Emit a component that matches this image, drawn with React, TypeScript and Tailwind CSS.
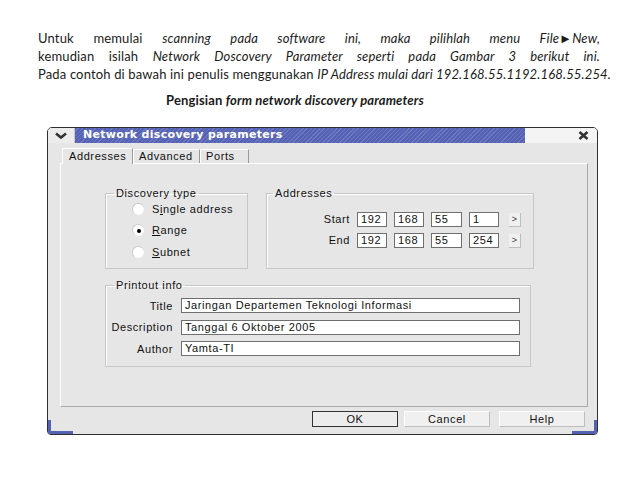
import React from 'react'

const dlgFont = { fontFamily: '"Liberation Sans", Arial, sans-serif' }

const Radio = ({ checked, children }: { checked?: boolean; children: React.ReactNode }) => (
  <div className="flex items-center h-[21.5px]">
    <span className="w-[12px] h-[12px] rounded-full bg-white border-l border-t border-[#c9c9c9] flex items-center justify-center ml-[26px] mr-[8px]">
      {checked && <span className="w-[4px] h-[4px] rounded-full bg-black" />}
    </span>
    <span>{children}</span>
  </div>
)

const Box = ({ v, w = 'w-[30px]' }: { v: string; w?: string }) => (
  <div className={`${w} h-[15px] bg-white border border-[#6f6f6f] pl-[3px] leading-[13px]`}>{v}</div>
)

const Arrow = () => (
  <div className="w-[12px] h-[14px] bg-[#f0f0f0] border-r border-b border-[#bdbdbd] text-[9px] leading-[13px] text-center text-[#333] tracking-normal">&gt;</div>
)

const Field = ({ label, value }: { label: string; value: string }) => (
  <div className="flex items-center h-[21.5px]">
    <span className="w-[75px] text-right pr-[8px]">{label}</span>
    <div className="flex-1 h-[15px] bg-white border border-[#6f6f6f] pl-[3px] leading-[13px]">{value}</div>
  </div>
)

const Btn = ({ label, def }: { label: string; def?: boolean }) => (
  <div
    className={`w-[86px] h-[16px] text-center leading-[14px] ${
      def
        ? 'border border-[#333] bg-[#ececec]'
        : 'bg-[#f0f0f0] border-t border-l border-white border-r border-b border-r-[#bdbdbd] border-b-[#bdbdbd]'
    }`}
  >
    {label}
  </div>
)

export default function App() {
  return (
    <div className="w-[638px] h-[478px] bg-white overflow-hidden text-[#1b1b1b]">
      <div className="pt-[29px] px-[38px] text-[13px] tracking-[0.15px] leading-[18px]" style={{ fontFamily: 'Lato, "Open Sans", sans-serif' }}>
        <p className="text-justify [text-align-last:justify]">
          Untuk memulai <i>scanning pada software ini, maka pilihlah menu File►New,</i>
        </p>
        <p className="text-justify [text-align-last:justify]">
          kemudian isilah <i>Network Doscovery Parameter seperti pada Gambar 3 berikut ini.</i>
        </p>
        <p className="whitespace-nowrap">
          Pada contoh di bawah ini penulis menggunakan <i>IP Address mulai dari 192.168.55.1192.168.55.254.</i>
        </p>
      </div>
      <p className="mt-[8px] pl-[166px] text-[13px] tracking-[0.15px] leading-[18px] font-bold" style={{ fontFamily: 'Lato, "Open Sans", sans-serif' }}>
        Pengisian <i>form network discovery parameters</i>
      </p>

      {/* dialog window */}
      <div
        className="relative mt-[18px] ml-[47px] w-[551px] h-[308px] border border-[#2f2f2f] rounded-t-[5px] rounded-b-[4px] bg-[#e6e6e6] flex flex-col text-[11px] tracking-[0.6px] text-[#111] overflow-hidden"
        style={dlgFont}
      >
        <div className="h-[15px] flex shrink-0">
          <div className="w-[27px] bg-[#ececec] flex items-center justify-center border-r border-[#c8c8c8]">
            <svg width="14" height="8" viewBox="0 0 14 8">
              <polyline points="2,1.5 7,5.5 12,1.5" fill="none" stroke="#333" strokeWidth="2.6" />
            </svg>
          </div>
          <div className="flex-1 flex items-center pl-[8px] bg-[repeating-linear-gradient(135deg,#5562b3_0px,#5562b3_2px,#6d78c2_2px,#6d78c2_3px)]">
            <span className="text-white font-bold text-[11px] tracking-[0.3px]" style={{ fontFamily: '"DejaVu Sans", Verdana, sans-serif' }}>
              Network discovery parameters
            </span>
          </div>
          <div className="w-[72px] bg-[#f4f4f4] flex items-center justify-end pr-[8px]">
            <svg width="11" height="9" viewBox="0 0 11 9">
              <path d="M1.5 1 L9.5 8 M9.5 1 L1.5 8" stroke="#333" strokeWidth="2.6" />
            </svg>
          </div>
        </div>

        <div className="flex-1 flex flex-col pl-[12px] pr-[9px] pt-[4px]">
          <div className="flex items-end h-[16px]">
            <div className="ml-[2px] w-[71px] h-[16px] bg-[#e6e6e6] border-t border-l border-white border-r border-r-[#9a9a9a] pl-[6px] leading-[15px] relative z-10 -mb-px pb-px">
              Addresses
            </div>
            <div className="w-[67px] h-[14px] border-t border-l border-white border-r border-r-[#9a9a9a] pl-[5px] leading-[13px]">Advanced</div>
            <div className="w-[49px] h-[14px] border-t border-l border-white border-r border-r-[#9a9a9a] pl-[5px] leading-[13px]">Ports</div>
          </div>

          <div className="h-[244px] border-t border-l border-white border-r border-b border-r-[#a9a9a9] border-b-[#a9a9a9] pl-[44px] pt-[23px]">
            <div className="flex gap-[18px]">
              <fieldset className="w-[143px] h-[82px] border border-[#c6c6c6] shadow-[inset_1px_1px_0_#fff]">
                <legend className="ml-[8px] px-[2px] leading-[13px]">Discovery type</legend>
                <div className="-mt-[2px]">
                  <Radio>
                    S<span className="underline">i</span>ngle address
                  </Radio>
                  <Radio checked>
                    <span className="underline">R</span>ange
                  </Radio>
                  <Radio>
                    <span className="underline">S</span>ubnet
                  </Radio>
                </div>
              </fieldset>
              <fieldset className="w-[268px] h-[82px] border border-[#c6c6c6] shadow-[inset_1px_1px_0_#fff]">
                <legend className="ml-[6px] px-[2px] leading-[13px]">Addresses</legend>
                <div className="pt-[12px] pr-[12px] flex flex-col items-end gap-[6px]">
                  <div className="flex items-center gap-[7px] h-[15px]">
                    <span>Start</span>
                    <Box v="192" />
                    <Box v="168" />
                    <Box v="55" w="w-[31px]" />
                    <Box v="1" />
                    <span className="ml-[3px]"><Arrow /></span>
                  </div>
                  <div className="flex items-center gap-[7px] h-[15px]">
                    <span>End</span>
                    <Box v="192" />
                    <Box v="168" />
                    <Box v="55" w="w-[31px]" />
                    <Box v="254" />
                    <span className="ml-[3px]"><Arrow /></span>
                  </div>
                </div>
              </fieldset>
            </div>

            <fieldset className="mt-[10px] w-[426px] h-[88px] border border-[#c6c6c6] shadow-[inset_1px_1px_0_#fff] pr-[10px]">
              <legend className="ml-[8px] px-[2px] leading-[13px]">Printout info</legend>
              <div className="pt-[3px]">
                <Field label="Title" value="Jaringan Departemen Teknologi Informasi" />
                <Field label="Description" value="Tanggal 6 Oktober 2005" />
                <Field label="Author" value="Yamta-TI" />
              </div>
            </fieldset>
          </div>

          <div className="flex justify-end mt-[4px] pr-[3px]">
            <Btn label="OK" def />
            <div className="w-[6px]" />
            <Btn label="Cancel" />
            <div className="w-[9px]" />
            <Btn label="Help" />
          </div>
        </div>

        {/* blue corner accents */}
        <div className="absolute left-0 bottom-0 w-[25px] h-[14px] border-l-[3px] border-b-[3px] border-[#5562b3] rounded-bl-[3px]" />
        <div className="absolute right-0 bottom-0 w-[25px] h-[14px] border-r-[3px] border-b-[3px] border-[#5562b3] rounded-br-[3px]" />
      </div>
    </div>
  )
}
